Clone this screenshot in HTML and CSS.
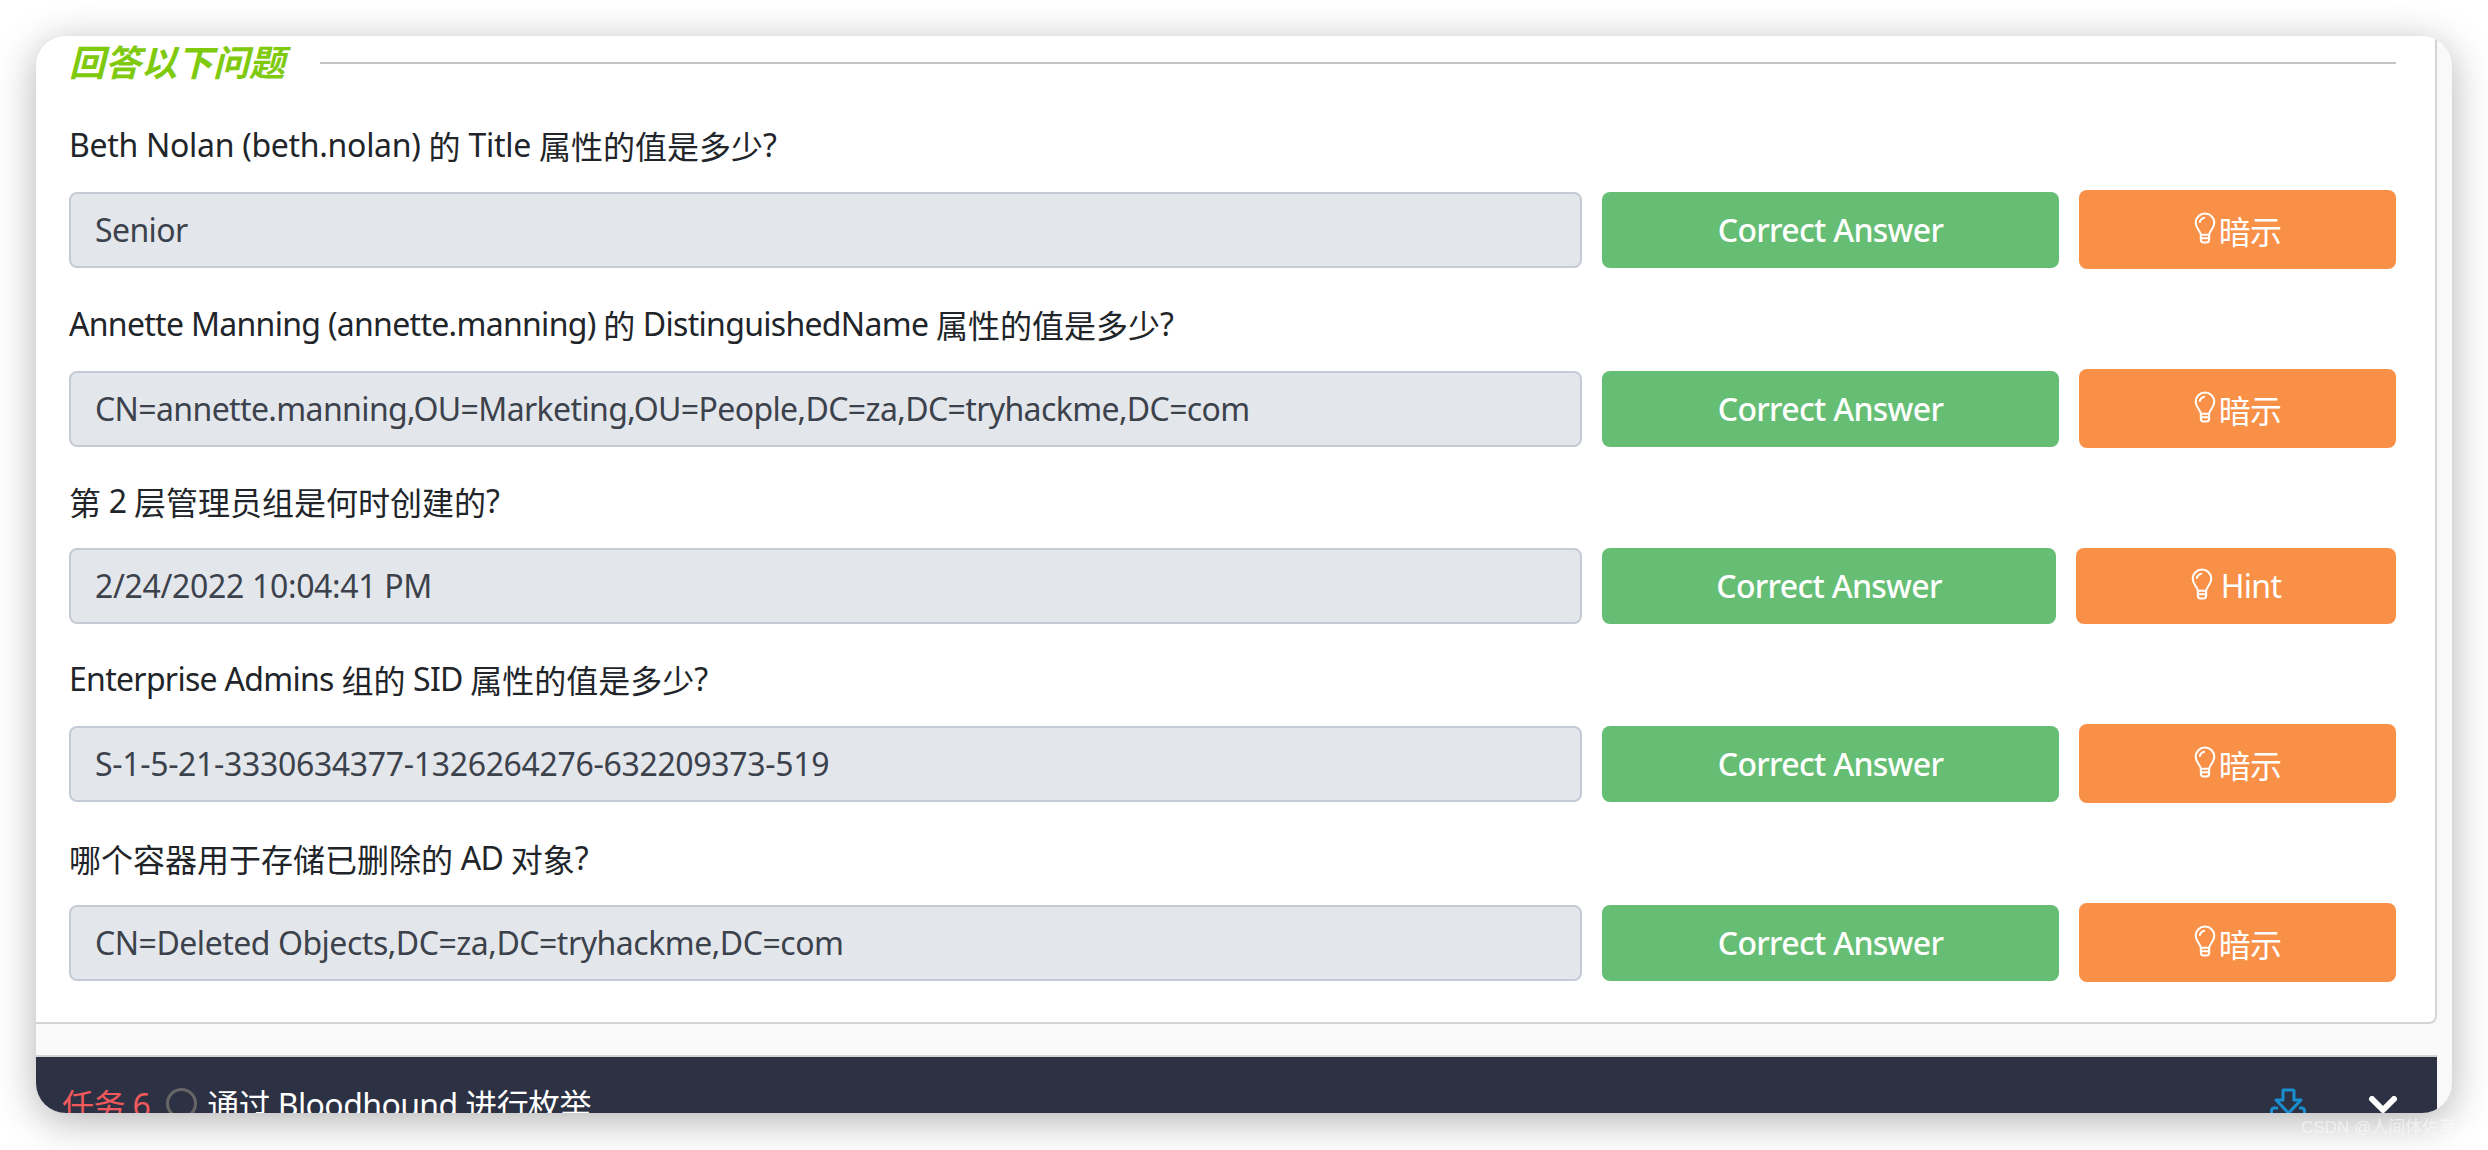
FILE: index.html
```html
<!DOCTYPE html>
<html lang="zh">
<head>
<meta charset="utf-8">
<title>回答以下问题</title>
<link rel="stylesheet" href="styles.css">
</head>
<body>
<main class="window">
  <section class="card">
    <header class="section-title"><h2>回答以下问题</h2><span class="rule"></span></header>

    <div class="qa qa-tall">
      <p class="question loose">Beth Nolan (beth.nolan) <span class="zh">的</span> Title <span class="zh">属性的值是多少</span>?</p>
      <div class="answer-row">
        <div class="answer">Senior</div>
        <button class="btn correct">Correct Answer</button>
        <button class="btn hint"><svg class="bulb" viewBox="0 0 21 31"><path d="M6.5 22C6 18 1.5 16 1.5 10.5a9 9 0 0 1 18 0C19.500 16 15 18 14.500 22ZM6.500 22v5q0 2.500 2.500 2.500h3q2.500 0 2.500-2.500v-5M6.500 25.500h8M5.500 10.500a5 5 0 0 1 5-5"/></svg><span>暗示</span></button>
      </div>
    </div>

    <div class="qa qa-short">
      <p class="question">Annette Manning (annette.manning) <span class="zh">的</span> DistinguishedName <span class="zh">属性的值是多少</span>?</p>
      <div class="answer-row">
        <div class="answer">CN=annette.manning,OU=Marketing,OU=People,DC=za,DC=tryhackme,DC=com</div>
        <button class="btn correct">Correct Answer</button>
        <button class="btn hint"><svg class="bulb" viewBox="0 0 21 31"><path d="M6.5 22C6 18 1.5 16 1.5 10.5a9 9 0 0 1 18 0C19.500 16 15 18 14.500 22ZM6.500 22v5q0 2.500 2.500 2.500h3q2.500 0 2.500-2.500v-5M6.500 25.500h8M5.500 10.500a5 5 0 0 1 5-5"/></svg><span>暗示</span></button>
      </div>
    </div>

    <div class="qa">
      <p class="question"><span class="zh">第</span> 2 <span class="zh">层管理员组是何时创建的</span>?</p>
      <div class="answer-row">
        <div class="answer numeric">2/24/2022 10:04:41 PM</div>
        <button class="btn correct narrow">Correct Answer</button>
        <button class="btn hint wide"><svg class="bulb" viewBox="0 0 21 31"><path d="M6.5 22C6 18 1.5 16 1.5 10.5a9 9 0 0 1 18 0C19.500 16 15 18 14.500 22ZM6.500 22v5q0 2.500 2.500 2.500h3q2.500 0 2.500-2.500v-5M6.500 25.500h8M5.500 10.500a5 5 0 0 1 5-5"/></svg><span class="hint-latin">Hint</span></button>
      </div>
    </div>

    <div class="qa qa-tall">
      <p class="question">Enterprise Admins <span class="zh">组的</span> SID <span class="zh">属性的值是多少</span>?</p>
      <div class="answer-row">
        <div class="answer numeric">S-1-5-21-3330634377-1326264276-632209373-519</div>
        <button class="btn correct">Correct Answer</button>
        <button class="btn hint"><svg class="bulb" viewBox="0 0 21 31"><path d="M6.5 22C6 18 1.5 16 1.5 10.5a9 9 0 0 1 18 0C19.500 16 15 18 14.500 22ZM6.500 22v5q0 2.500 2.500 2.500h3q2.500 0 2.500-2.500v-5M6.500 25.500h8M5.500 10.500a5 5 0 0 1 5-5"/></svg><span>暗示</span></button>
      </div>
    </div>

    <div class="qa">
      <p class="question"><span class="zh">哪个容器用于存储已删除的</span> AD <span class="zh">对象</span>?</p>
      <div class="answer-row">
        <div class="answer mixed">CN=Deleted Objects,DC=za,DC=tryhackme,DC=com</div>
        <button class="btn correct">Correct Answer</button>
        <button class="btn hint"><svg class="bulb" viewBox="0 0 21 31"><path d="M6.5 22C6 18 1.5 16 1.5 10.5a9 9 0 0 1 18 0C19.500 16 15 18 14.500 22ZM6.500 22v5q0 2.500 2.500 2.500h3q2.500 0 2.500-2.500v-5M6.500 25.500h8M5.500 10.500a5 5 0 0 1 5-5"/></svg><span>暗示</span></button>
      </div>
    </div>
  </section>

  <section class="task">
    <span class="task-no">任务 6</span>
    <span class="status"></span>
    <span class="task-name">通过 Bloodhound 进行枚举</span>
    <svg class="download" viewBox="0 0 36 36"><path d="M13 2h10q1 0 1 1v9h7L18.500 25 6 12h7ZM8 20H4q-2.500 0-2.500 3v11h33V23q0-3-2.500-3h-3M29 29v1"/></svg>
    <svg class="chevron" viewBox="0 0 28 17"><path d="M3 3l11 11L25 3"/></svg>
  </section>
</main>
<div class="watermark">CSDN @人间体佐菲</div>
</body>
</html>
```
FILE: styles.css
```css
* { box-sizing: border-box; }
html, body { margin: 0; height: 100%; background: #fff; overflow: hidden; }
body {
  position: relative;
  padding: 36px 36px 0;
  font-family: "Noto Sans", "Noto Sans CJK SC", sans-serif;
  font-size: 32px;
}
.window {
  height: 1077px;
  border-radius: 30px;
  overflow: hidden;
  background: #f9f9f9;
  box-shadow: 0 8px 40px rgba(0, 0, 0, .3);
}
.card {
  height: 988px;
  margin-right: 15px;
  padding: 0 39px 0 33px;
  background: #fff;
  border-right: 2px solid #d4d4d4;
  border-bottom: 2px solid #d4d4d4;
  border-bottom-right-radius: 8px;
}
.section-title {
  display: flex;
  align-items: center;
  gap: 35px;
  height: 54px;
  margin-bottom: 28px;
}
.section-title h2 {
  margin: 0;
  font-size: 36px;
  line-height: 54px;
  font-style: italic;
  font-weight: 700;
  color: #7fc90f;
}
.rule { flex: 1; height: 2px; background: #c4c4c4; }
.qa { height: 178px; }
.qa-tall { height: 179px; }
.qa-short { height: 177px; }
.question {
  display: flex;
  align-items: center;
  height: 53px;
  margin: 0 0 19px;
  color: #212529;
  white-space: pre;
  letter-spacing: -.7px;
}
.question.loose { letter-spacing: -.3px; }
.zh { letter-spacing: 0; }
.answer-row { display: flex; align-items: center; gap: 20px; height: 79px; }
.answer {
  flex: 1;
  height: 76px;
  display: flex;
  align-items: center;
  padding: 0 24px;
  background: #e3e6eb;
  border: 2px solid #c5cbd4;
  border-radius: 8px;
  color: #3c424b;
  white-space: pre;
  letter-spacing: -.62px;
}
.answer.numeric { letter-spacing: -.33px; }
.answer.mixed { letter-spacing: -.48px; }
.btn {
  display: flex;
  align-items: center;
  justify-content: center;
  border: 0;
  padding: 0;
  border-radius: 8px;
  color: #fff;
  font: inherit;
  letter-spacing: -.7px;
}
.correct { width: 457px; height: 76px; background: #65be74; font-weight: 500; }
.correct.narrow { width: 454px; }
.hint { width: 317px; height: 79px; background: #f99047; gap: 3px; }
.hint.wide { width: 320px; height: 76px; gap: 8px; }
.bulb { width: 22px; height: 32px; fill: none; stroke: #fff; stroke-width: 2; margin-bottom: 3px; }
.task {
  display: flex;
  align-items: flex-start;
  height: 96px;
  margin-top: 31px;
  margin-right: 15px;
  padding: 27px 40px 0 26px;
  background: #2c3143;
  border-top: 2px solid #d4d4d4;
  line-height: 42px;
  white-space: pre;
  letter-spacing: -.6px;
}
.task-no { color: #f0595b; }
.status {
  width: 31px;
  height: 31px;
  margin: 4px 10px 0 16px;
  border: 3px solid #666;
  border-radius: 50%;
}
.task-name { color: #fff; }
.download { width: 36px; height: 36px; margin: 4px 63px 0 auto; fill: none; stroke: #1a8fd0; stroke-width: 3; stroke-linejoin: round; flex: none; }
.chevron { width: 28px; height: 17px; margin-top: 12px; fill: none; stroke: #fff; stroke-width: 6; stroke-linecap: round; stroke-linejoin: round; flex: none; }
.watermark {
  position: absolute;
  left: 2301px;
  top: 1116px;
  font-family: "Liberation Sans", "Noto Sans CJK SC", sans-serif;
  font-size: 17px;
  line-height: 24px;
  white-space: nowrap;
  color: rgba(255, 255, 255, .55);
}
```
